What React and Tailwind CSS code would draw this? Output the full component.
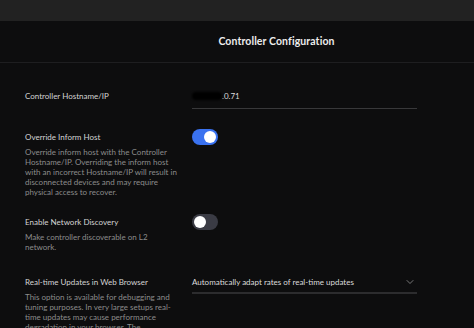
import { ChevronDown } from 'lucide-react';

function Toggle({ on }) {
  return (
    <div
      className={`w-[26px] h-[16px] rounded-full flex items-center px-[2px] ${
        on ? 'bg-[#3a72f0] justify-end' : 'bg-[#3a3b44] justify-start'
      }`}
    >
      <div className="w-[12px] h-[12px] rounded-full bg-white" />
    </div>
  );
}

function Desc({ children }) {
  return (
    <p className="mt-[4px] w-[152px] text-[8px] leading-[10px] text-[#8c8c8c]">{children}</p>
  );
}

export default function App() {
  return (
    <div className="w-[474px] h-[328px] overflow-hidden bg-[#0d0d0e] font-['Lato','Liberation_Sans',sans-serif]">
      {/* top bar */}
      <div className="h-[21px] bg-[#222222]" />

      {/* header */}
      <div className="h-[42px] border-b border-[#1e1e20] flex items-center justify-center pl-[79px]">
        <h1 className="text-[10.5px] font-bold text-[#ececec] tracking-[0.1px]">Controller Configuration</h1>
      </div>

      <div className="pl-[25px]">
        {/* hostname */}
        <div className="flex mt-[24px]">
          <div className="w-[167px] text-[8px] leading-[11px] text-[#d4d4d4] pt-[4px]">Controller Hostname/IP</div>
          <div className="w-[225px] h-[22px] border-b border-[#38383a] flex items-start pt-[4px] text-[8px] leading-[11px] text-[#dcdcdc]">
            <span className="inline-block w-[30px] h-[8px] mt-[1px] rounded-full bg-black blur-[1px]" />
            <span>.0.71</span>
          </div>
        </div>

        {/* override inform host */}
        <div className="flex mt-[23px]">
          <div className="w-[167px]">
            <div className="text-[8px] leading-[11px] text-[#d4d4d4]">Override Inform Host</div>
            <Desc>
              Override inform host with the Controller Hostname/IP. Overriding the inform host with an incorrect
              Hostname/IP will result in disconnected devices and may require physical access to recover.
            </Desc>
          </div>
          <div className="-mt-[3px]">
            <Toggle on />
          </div>
        </div>

        {/* network discovery */}
        <div className="flex mt-[20px]">
          <div className="w-[167px]">
            <div className="text-[8px] leading-[11px] text-[#d4d4d4]">Enable Network Discovery</div>
            <Desc>Make controller discoverable on L2 network.</Desc>
          </div>
          <div className="-mt-[3px]">
            <Toggle />
          </div>
        </div>

        {/* real-time updates */}
        <div className="flex mt-[25px]">
          <div className="w-[167px]">
            <div className="text-[8px] leading-[11px] text-[#d4d4d4]">Real-time Updates in Web Browser</div>
            <Desc>
              This option is available for debugging and tuning purposes. In very large setups real-time updates may
              cause performance degradation in your browser. The
            </Desc>
          </div>
          <div className="w-[225px] h-[17px] border-b-2 border-[#2c2c2e] flex items-start justify-between text-[8px] leading-[11px] text-[#dcdcdc]">
            <span>Automatically adapt rates of real-time updates</span>
            <ChevronDown className="w-[12px] h-[12px] -mt-[1px] mr-[1px] text-[#9a9a9a]" strokeWidth={1.5} />
          </div>
        </div>
      </div>
    </div>
  );
}
